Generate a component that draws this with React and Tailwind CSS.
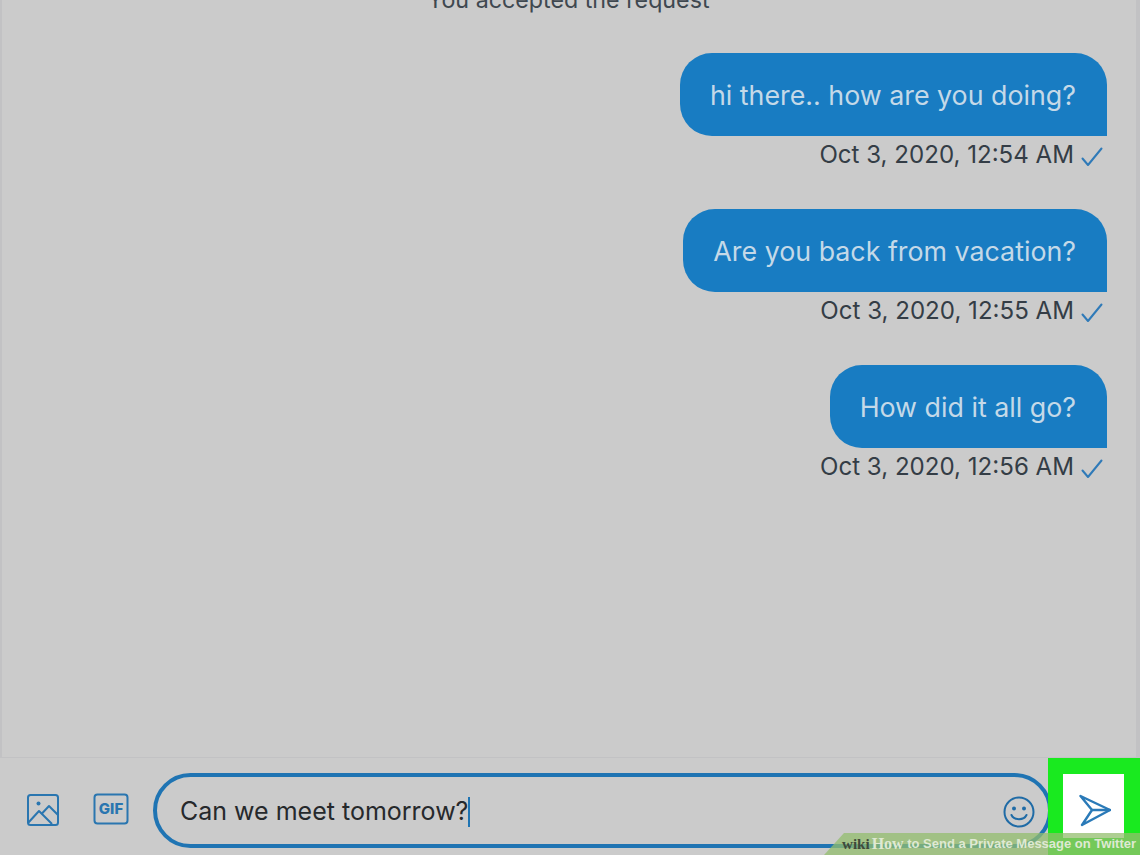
import React from "react";

const font = { fontFamily: '"Inter", "Liberation Sans", sans-serif' };

function Check() {
  return (
    <svg width="24" height="24" viewBox="0 0 24 24" fill="none" className="ml-[6px] mr-[3px] mt-[3px]">
      <path d="M2.5 13.5 L8 20 L21.5 3.5" stroke="#2f7ab8" strokeWidth="2" strokeLinecap="round" strokeLinejoin="round" />
    </svg>
  );
}

function Message({ text, time, mt }) {
  return (
    <div className={`flex flex-col items-end ${mt}`}>
      <div className="h-[83px] flex items-center pl-[30px] pr-[31px] bg-[#187cc2] text-[#c4d9e8] text-[26.8px] rounded-t-[32px] rounded-bl-[32px]">
        <span className="mt-[2px]">{text}</span>
      </div>
      <div className="h-[38px] flex items-center text-[#343d46] text-[24.1px]">
        <span className="mt-[1px]">{time}</span>
        <Check />
      </div>
    </div>
  );
}

export default function App() {
  return (
    <div style={font} className="relative w-[1140px] h-[855px] overflow-hidden bg-[#cbcbcb] flex flex-col">
      <div className="flex-1 flex flex-col border-l-2 border-r-4 border-[#c2c2c4] pr-[29px]">
        <div className="h-[53px] -mt-[15px] shrink-0 text-center text-[#3f4850] text-[23.25px] leading-[30px] ml-[28px]">
          You accepted the request
        </div>
        <div className="mt-[15px] flex flex-col">
          <Message text="hi there.. how are you doing?" time="Oct 3, 2020, 12:54 AM" mt="" />
          <Message text="Are you back from vacation?" time="Oct 3, 2020, 12:55 AM" mt="mt-[35px]" />
          <Message text="How did it all go?" time="Oct 3, 2020, 12:56 AM" mt="mt-[35px]" />
        </div>
      </div>
      <div className="h-[98px] shrink-0 border-t border-[#c2c2c4] flex items-center">
        <div className="flex-1 flex items-center min-w-0 pl-[26px] -mr-[4px] pt-[8px]">
          <svg width="34" height="34" viewBox="0 0 34 34" fill="none" stroke="#2a76b0" strokeWidth="2" strokeLinejoin="round" className="shrink-0 -mt-[2px]">
            <rect x="2" y="2" width="30" height="30" rx="2.5" />
            <circle cx="12.5" cy="10.5" r="2" fill="#2a76b0" stroke="none" />
            <path d="M2 30 L13 18 L26 31" />
            <path d="M15.5 21 L23 13 L32 22" />
          </svg>
          <svg width="36" height="32" viewBox="0 0 36 32" fill="none" className="shrink-0 ml-[33px] -mt-[3px]">
            <rect x="1.5" y="1.5" width="33" height="29" rx="3" stroke="#2a76b0" strokeWidth="2" />
            <text x="18" y="21" textAnchor="middle" fill="#2a76b0" fontSize="15" fontWeight="800" fontFamily="Inter, sans-serif">GIF</text>
          </svg>
          <div className="ml-[24px] flex-1 h-[75px] rounded-full border-[4px] border-[#1f74b3] flex items-center pl-[23px] pr-[12px] min-w-0">
            <span className="text-[25px] text-[#26292c] mt-[2px]">Can we meet tomorrow?</span>
            <span className="w-[2px] h-[30px] bg-[#1f74b3] mt-[2px]" />
            <svg width="34" height="34" viewBox="0 0 34 34" fill="none" stroke="#1f6ba6" strokeWidth="2" className="ml-auto shrink-0 mt-[2px]">
              <circle cx="17" cy="17" r="14.5" />
              <circle cx="12" cy="13.5" r="2" fill="#1f6ba6" stroke="none" />
              <circle cx="22" cy="13.5" r="2" fill="#1f6ba6" stroke="none" />
              <path d="M9.5 20 C12 25.5 22 25.5 24.5 20" strokeLinecap="round" />
            </svg>
          </div>
        </div>
        <div className="relative w-[92px] h-full bg-[#19ea1f] shrink-0 flex items-start justify-start pt-[16px] pl-[15px]">
          <div className="w-[61px] h-[64px] bg-white pt-[20px] pl-[16px]">
            <svg width="32" height="34" viewBox="0 0 32 34" fill="none" stroke="#2a7ab8" strokeWidth="2.4" strokeLinejoin="round" strokeLinecap="round">
              <path d="M1.5 2 L31 16 L3 31 L13 16 Z" />
              <path d="M13 16 H31" />
            </svg>
          </div>
        </div>
      </div>
      <div
        className="absolute right-0 bottom-0 h-[22px] w-[316px] bg-[#93bd6e]/75 flex items-center justify-end pr-[4px] text-[13px] font-bold text-[#dfe9d3] whitespace-nowrap"
        style={{ clipPath: "polygon(20px 0, 100% 0, 100% 100%, 0 100%)", fontFamily: '"Liberation Sans", sans-serif' }}
      >
        <span className="text-[#3f4a3a] text-[15px] mr-[2px]" style={{ fontFamily: '"Liberation Serif", serif' }}>wiki</span>
        <span style={{ fontFamily: '"Liberation Serif", serif' }} className="text-[16px]">How</span>
        <span>&nbsp;to Send a Private Message on Twitter</span>
      </div>
    </div>
  );
}
